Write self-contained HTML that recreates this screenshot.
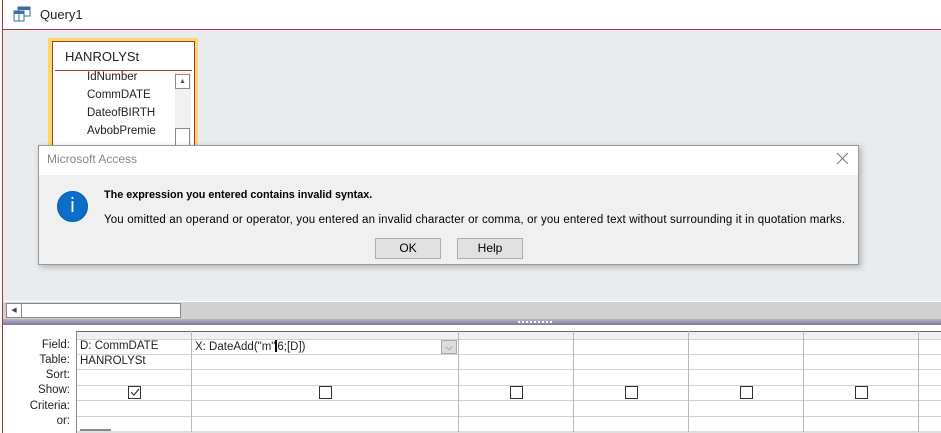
<!DOCTYPE html>
<html><head><style>
*{margin:0;padding:0;box-sizing:border-box}
body{width:941px;height:433px;overflow:hidden;background:#fff;font-family:"Liberation Sans",sans-serif;font-size:12px;color:#222;position:relative}
.a{position:absolute}
.hl{position:absolute;height:1px;background:#ccd3df}
.vl{position:absolute;width:1px;background:#b4b8bf}
.cb{position:absolute;width:13px;height:13px;border:1px solid #333;background:#fff}
.lbl{position:absolute;right:871px;font-size:11.5px;color:#222;text-align:right}
.btn{position:absolute;height:21px;border:1px solid #adadad;background:#e1e1e1;font-size:12px;text-align:center;line-height:19px;color:#000}
</style></head><body>
<div class="a" style="left:2px;top:0;width:1px;height:433px;background:#a4373a"></div>
<svg class="a" style="left:13px;top:6px" width="18" height="16" viewBox="0 0 18 16">
<rect x="5" y="1" width="12" height="9" fill="#fff" stroke="#3a6ea5"/><rect x="5" y="1" width="12" height="3" fill="#3a6ea5"/>
<rect x="1" y="5" width="10" height="10" fill="#fff" stroke="#3a6ea5"/><rect x="1" y="5" width="10" height="3" fill="#3a6ea5"/>
<line x1="6" y1="8" x2="6" y2="15" stroke="#3a6ea5"/></svg>
<div class="a" style="left:40px;top:7px;font-size:13px;color:#222">Query1</div>
<div class="a" style="left:3px;top:29px;width:938px;height:1px;background:#a4373a"></div>
<div class="a" style="left:3px;top:30px;width:938px;height:271px;background:#e9ecef"></div>
<div class="a" style="left:48px;top:38px;width:150px;height:120px;background:#fdd865"></div>
<div class="a" style="left:52px;top:41px;width:143px;height:117px;background:#fff;border:1px solid #a4373a"></div>
<div class="a" style="left:65px;top:49px;font-size:13px;color:#222">HANROLYSt</div>
<div class="a" style="left:55px;top:70px;width:137px;height:1px;background:#a4373a"></div>
<div class="a" style="left:87px;top:68px;font-size:11.5px;line-height:18px;color:#222">IdNumber<br>CommDATE<br>DateofBIRTH<br>AvbobPremie</div>
<div class="a" style="left:175px;top:72px;width:16px;height:80px;background:#f0f0f0"></div>
<div class="a" style="left:175px;top:74px;width:15px;height:15px;border:1px solid #888;background:#fff;font-size:7px;text-align:center;line-height:13px;color:#555">▲</div>
<div class="a" style="left:175px;top:128px;width:15px;height:22px;border:1px solid #888;background:#fff"></div>
<div class="a" style="left:3px;top:301px;width:938px;height:18px;background:#d1d1d1;border-top:1px solid #fff"></div>
<div class="a" style="left:6px;top:303px;width:175px;height:15px;background:#fff;border:1px solid #888"></div>
<div class="a" style="left:6px;top:303px;width:16px;height:15px;border:1px solid #888;font-size:7px;text-align:center;line-height:13px;color:#444">◀</div>
<div class="a" style="left:3px;top:319px;width:938px;height:6px;background:linear-gradient(#b7b5cd,#7d7a9c)"></div>
<div class="a" style="left:518px;top:321px;width:35px;height:2px;background:repeating-linear-gradient(90deg,#fff 0 2px,transparent 2px 4px)"></div>
<div class="a" style="left:76px;top:331px;width:865px;height:1px;background:#666"></div>
<div class="a" style="left:77px;top:332px;width:864px;height:7px;background:#f0f0f0"></div>
<div class="hl" style="left:76px;top:339px;width:865px"></div>
<div class="hl" style="left:76px;top:354px;width:865px"></div>
<div class="hl" style="left:76px;top:369px;width:865px"></div>
<div class="hl" style="left:76px;top:385px;width:865px"></div>
<div class="hl" style="left:76px;top:400px;width:865px"></div>
<div class="hl" style="left:76px;top:416px;width:865px"></div>
<div class="a" style="left:76px;top:431px;width:865px;height:2px;background:#ddd"></div>
<div class="vl" style="left:76px;top:331px;height:102px;background:#888"></div>
<div class="vl" style="left:191px;top:331px;height:101px"></div>
<div class="vl" style="left:458px;top:331px;height:101px"></div>
<div class="vl" style="left:573px;top:331px;height:101px"></div>
<div class="vl" style="left:688px;top:331px;height:101px"></div>
<div class="vl" style="left:803px;top:331px;height:101px"></div>
<div class="vl" style="left:918px;top:331px;height:101px"></div>
<div class="lbl" style="top:339px">Field:</div>
<div class="lbl" style="top:354px">Table:</div>
<div class="lbl" style="top:369px">Sort:</div>
<div class="lbl" style="top:384px">Show:</div>
<div class="lbl" style="top:400px">Criteria:</div>
<div class="lbl" style="top:415px">or:</div>
<div class="a" style="left:80px;top:340px;font-size:11.5px">D: CommDATE</div>
<div class="a" style="left:80px;top:355px;font-size:11.5px">HANROLYSt</div>
<div class="a" style="left:195px;top:340px;font-size:11.5px">X: DateAdd("m"<span style="display:inline-block;width:2px;height:12px;background:#000;vertical-align:-2px"></span>6;[D])</div>
<div class="a" style="left:441px;top:340px;width:16px;height:14px;background:#ddd;border:1px solid #aaa;font-size:9px;text-align:center;line-height:12px;color:#555">⌵</div>
<div class="cb" style="left:128px;top:386px"></div>
<svg class="a" style="left:130px;top:388px" width="10" height="9"><path d="M1 4 L4 7 L9 1" stroke="#333" fill="none" stroke-width="1.2"/></svg>
<div class="cb" style="left:319px;top:386px"></div>
<div class="cb" style="left:510px;top:386px"></div>
<div class="cb" style="left:625px;top:386px"></div>
<div class="cb" style="left:740px;top:386px"></div>
<div class="cb" style="left:855px;top:386px"></div>
<div class="a" style="left:80px;top:429px;width:31px;height:2px;background:#888"></div>
<div class="a" style="left:38px;top:145px;width:821px;height:120px;background:#f0f0f0;border:1px solid #9a9a9a;box-shadow:2px 2px 6px rgba(0,0,0,.25)"></div>
<div class="a" style="left:39px;top:146px;width:819px;height:29px;background:#fff"></div>
<div class="a" style="left:47px;top:152px;font-size:12px;color:#888">Microsoft Access</div>
<svg class="a" style="left:836px;top:152px" width="13" height="13"><path d="M1 1 L12 12 M12 1 L1 12" stroke="#777" stroke-width="1"/></svg>
<div class="a" style="left:57px;top:191px;width:31px;height:31px;border-radius:50%;background:#0b6fca;border:1px solid #0a5aa5;color:#fff;font-size:20px;text-align:center;line-height:29px">i</div>
<div class="a" style="left:104px;top:189px;font-size:10.8px;font-weight:bold;color:#000">The expression you entered contains invalid syntax.</div>
<div class="a" style="left:104px;top:214px;font-size:11.5px;color:#000;letter-spacing:0.15px">You omitted an operand or operator, you entered an invalid character or comma, or you entered text without surrounding it in quotation marks.</div>
<div class="btn" style="left:375px;top:238px;width:66px">OK</div>
<div class="btn" style="left:457px;top:238px;width:66px">Help</div>
</body></html>
